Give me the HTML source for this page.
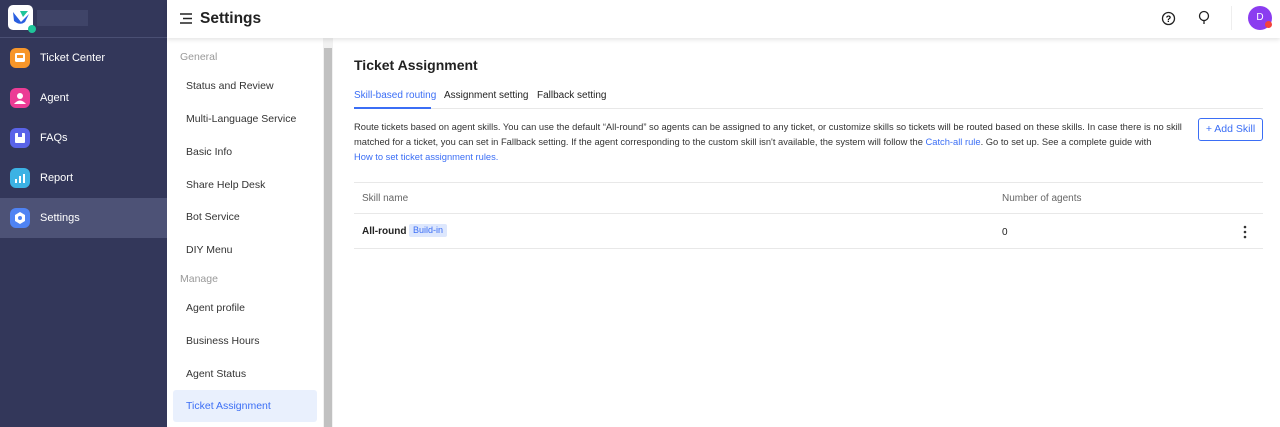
<!DOCTYPE html>
<html><head><style>
*{box-sizing:border-box;margin:0;padding:0}
body{width:1280px;height:427px;overflow:hidden;font-family:"Liberation Sans",sans-serif;background:#fff;position:relative;font-size:11px;color:#222}
.side{position:absolute;left:0;top:0;width:167px;height:427px;background:#33375a}
.logo{position:absolute;left:8px;top:5px;width:25px;height:25px;background:#fff;border-radius:5px}
.logo .dot{position:absolute;right:-3px;bottom:-3px;width:8px;height:8px;border-radius:50%;background:#1fc59a}
.blur{position:absolute;left:37px;top:10px;width:51px;height:16px;background:#3f4468}
.sep{position:absolute;left:0;top:37px;width:167px;height:1px;background:#4a4f73}
.nav{position:absolute;left:0;width:167px;height:40px;color:#fff;font-size:11px}
.nav .ic{position:absolute;left:10px;top:10px;width:20px;height:20px;border-radius:6px}
.nav .ic svg{position:absolute;left:0;top:0}
.nav span{position:absolute;left:40px;top:14px}
.top{position:absolute;left:167px;top:0;right:0;height:38px;background:#fff;box-shadow:0 2px 4px rgba(0,0,0,.1);z-index:2}
.top h1{position:absolute;left:33px;top:10px;font-size:15.5px;font-weight:bold;color:#222}
.menu{position:absolute;left:167px;top:38px;width:156px;height:389px;background:#fff}
.menu .g{position:absolute;left:13px;color:#999;font-size:10.5px}
.menu .i{position:absolute;left:19px;font-size:10.5px;color:#333}
.sel{position:absolute;left:6px;top:352px;width:144px;height:32px;background:#e9f0fd;border-radius:3px}
.sb{position:absolute;left:323px;top:38px;width:10px;height:389px;background:#f1f1f1}
.sb div{position:absolute;left:1px;top:10px;width:8px;height:379px;background:#c1c1c1}
.main{position:absolute;left:333px;top:38px;right:0;bottom:0;background:#fff}
a{color:#3b6ef5;text-decoration:none}
</style></head><body>
<div class="side">
 <div class="logo"><svg width="25" height="25"><path d="M5 7 L13 17 L21 9 L17 17 Q12 21 6 16Z" fill="#2a5fe0"/><path d="M12 6 L20 6 L15 12Z" fill="#1fc59a"/></svg><div class="dot"></div></div>
 <div class="blur"></div><div class="sep"></div>
 <div class="nav" style="top:38px"><div class="ic" style="background:#f7962a"><svg width="20" height="20"><rect x="5" y="5" width="10" height="9" rx="1.5" fill="#fff"/><rect x="7" y="7" width="6" height="3" fill="#f7962a"/></svg></div><span>Ticket Center</span></div>
 <div class="nav" style="top:78px"><div class="ic" style="background:#ec3c95"><svg width="20" height="20"><circle cx="10" cy="8" r="3" fill="#fff"/><path d="M4 16Q10 9 16 16Z" fill="#fff"/></svg></div><span>Agent</span></div>
 <div class="nav" style="top:118px"><div class="ic" style="background:#5a63e8"><svg width="20" height="20"><rect x="5" y="5" width="10" height="10" rx="1" fill="#fff"/><rect x="8" y="5" width="4" height="4" fill="#5a63e8"/></svg></div><span>FAQs</span></div>
 <div class="nav" style="top:158px"><div class="ic" style="background:#3cb2e4"><svg width="20" height="20"><path d="M6 15V11M10 15V8M14 15V6" stroke="#fff" stroke-width="2"/></svg></div><span>Report</span></div>
 <div class="nav" style="top:198px;background:#4d5276"><div class="ic" style="background:#4f83f3"><svg width="20" height="20"><path d="M10 4L15 7V13L10 16L5 13V7Z" fill="#fff"/><circle cx="10" cy="10" r="2" fill="#4f83f3"/></svg></div><span>Settings</span></div>
</div>
<div class="top">
 <svg style="position:absolute;left:13px;top:13px" width="12" height="11"><path d="M0 1H12M3 5.5H12M0 10H12" stroke="#222" stroke-width="1.6"/></svg>
 <h1>Settings</h1>
 <svg style="position:absolute;left:994px;top:11px" width="15" height="15"><circle cx="7.5" cy="7.5" r="6" fill="none" stroke="#222" stroke-width="1.3"/><text x="7.5" y="11" font-size="9" text-anchor="middle" font-family="Liberation Sans" font-weight="bold">?</text></svg>
 <svg style="position:absolute;left:1031px;top:10px" width="12" height="16"><circle cx="6" cy="6" r="4.5" fill="none" stroke="#222" stroke-width="1.3"/><path d="M6 10.5V14" stroke="#222" stroke-width="1.3"/></svg>
 <div style="position:absolute;left:1064px;top:6px;width:1px;height:24px;background:#eee"></div>
 <div style="position:absolute;left:1081px;top:6px;width:24px;height:24px;border-radius:50%;background:#8b3cf0;color:#fff;font-size:10px;text-align:center;line-height:24px">D</div>
 <div style="position:absolute;left:1098px;top:21px;width:7px;height:7px;border-radius:50%;background:#f4423b"></div>
</div>
<div class="menu">
 <div class="g" style="top:13px">General</div>
 <div class="i" style="top:42px">Status and Review</div>
 <div class="i" style="top:75px">Multi-Language Service</div>
 <div class="i" style="top:108px">Basic Info</div>
 <div class="i" style="top:141px">Share Help Desk</div>
 <div class="i" style="top:173px">Bot Service</div>
 <div class="i" style="top:206px">DIY Menu</div>
 <div class="g" style="top:235px">Manage</div>
 <div class="i" style="top:264px">Agent profile</div>
 <div class="i" style="top:297px">Business Hours</div>
 <div class="i" style="top:330px">Agent Status</div>
 <div class="sel"></div>
 <div class="i" style="top:362px;color:#3b6ef5">Ticket Assignment</div>
</div>
<div class="sb"><div></div></div>
<div class="main">
 <div style="position:absolute;left:21px;top:19px;font-size:14px;font-weight:bold">Ticket Assignment</div>
 <div style="position:absolute;left:21px;top:52px;font-size:10px;color:#3b6ef5">Skill-based routing</div>
 <div style="position:absolute;left:111px;top:52px;font-size:10px">Assignment setting</div>
 <div style="position:absolute;left:204px;top:52px;font-size:10px">Fallback setting</div>
 <div style="position:absolute;left:21px;top:70px;width:909px;height:1px;background:#e8e8e8"></div>
 <div style="position:absolute;left:21px;top:69px;width:77px;height:2px;background:#3b6ef5"></div>
 <div style="position:absolute;left:21px;top:82px;width:845px;font-size:9.35px;line-height:15px;color:#333;white-space:nowrap">Route tickets based on agent skills. You can use the default “All-round” so agents can be assigned to any ticket, or customize skills so tickets will be routed based on these skills. In case there is no skill<br>matched for a ticket, you can set in Fallback setting. If the agent corresponding to the custom skill isn't available, the system will follow the <a>Catch-all rule</a>. Go to set up. See a complete guide with<br><a>How to set ticket assignment rules.</a></div>
 <div style="position:absolute;left:865px;top:80px;width:65px;height:23px;border:1px solid #3b6ef5;border-radius:3px;color:#3b6ef5;font-size:10.5px;text-align:center;line-height:21px">+ Add Skill</div>
 <div style="position:absolute;left:21px;top:144px;width:909px;height:1px;background:#e8e8e8"></div>
 <div style="position:absolute;left:29px;top:155px;font-size:10px;color:#666">Skill name</div>
 <div style="position:absolute;left:669px;top:155px;font-size:10px;color:#666">Number of agents</div>
 <div style="position:absolute;left:21px;top:175px;width:909px;height:1px;background:#e8e8e8"></div>
 <div style="position:absolute;left:29px;top:188px;font-size:10px;font-weight:bold">All-round</div>
 <div style="position:absolute;left:76px;top:186px;padding:0 4px;height:13px;line-height:13px;background:#dde7fd;color:#3b6ef5;font-size:9px;border-radius:2px">Build-in</div>
 <div style="position:absolute;left:669px;top:189px;font-size:10px">0</div>
 <svg style="position:absolute;left:909px;top:187px" width="6" height="14"><circle cx="3" cy="2" r="1.3" fill="#333"/><circle cx="3" cy="7" r="1.3" fill="#333"/><circle cx="3" cy="12" r="1.3" fill="#333"/></svg>
 <div style="position:absolute;left:21px;top:210px;width:909px;height:1px;background:#e8e8e8"></div>
</div>
</body></html>
